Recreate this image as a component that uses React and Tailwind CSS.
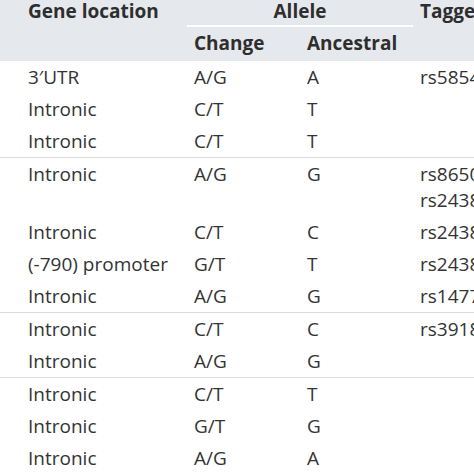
const groups = [
    [
        ["3\u2032UTR", "A/G", "A", ["rs58547"]],
        ["Intronic", "C/T", "T", []],
        ["Intronic", "C/T", "T", []],
    ],
    [
        ["Intronic", "A/G", "G", ["rs8650603", "rs2438318"]],
        ["Intronic", "C/T", "C", ["rs2438319"]],
        ["(-790) promoter", "G/T", "T", ["rs2438321"]],
        ["Intronic", "A/G", "G", ["rs1477429"]],
    ],
    [
        ["Intronic", "C/T", "C", ["rs3918233"]],
        ["Intronic", "A/G", "G", []],
    ],
    [
        ["Intronic", "C/T", "T", []],
        ["Intronic", "G/T", "G", []],
        ["Intronic", "A/G", "A", []],
    ],
]

const cols = "grid grid-cols-[187px_113px_113px_200px]"

export default function App() {
    return (
        <div className="w-[474px] h-[474px] overflow-hidden bg-white font-['Open_Sans',sans-serif] text-[19px] text-[#333]">
            {/* header */}
            <div className="bg-[#e5e9ed] h-[61px] font-bold text-[#2e2e2e]">
                <div className={`${cols} h-[27px] leading-[22px]`}>
                    <div className="pl-[28px] whitespace-nowrap">Gene location</div>
                    <div className="col-span-2 text-center border-b-2 border-white">Allele</div>
                    <div className="pl-[7px] whitespace-nowrap">Tagged SNPs</div>
                </div>
                <div className={`${cols} pt-[5px] leading-[22px]`}>
                    <div></div>
                    <div className="pl-[7px]">Change</div>
                    <div className="pl-[7px]">Ancestral</div>
                    <div></div>
                </div>
            </div>

            {groups.map((rows, gi) => (
                <div key={gi} className={gi > 0 ? "border-t border-[#dcdcdc]" : ""}>
                    {rows.map((r, ri) => (
                        <div key={ri} className={`${cols} py-[3px] leading-[26px]`}>
                            <div className="pl-[28px] whitespace-nowrap">{r[0]}</div>
                            <div className="pl-[7px]">{r[1]}</div>
                            <div className="pl-[7px]">{r[2]}</div>
                            <div className="pl-[7px] whitespace-nowrap">
                                {r[3].map((s) => (
                                    <div key={s}>{s}</div>
                                ))}
                            </div>
                        </div>
                    ))}
                </div>
            ))}
        </div>
    )
}
